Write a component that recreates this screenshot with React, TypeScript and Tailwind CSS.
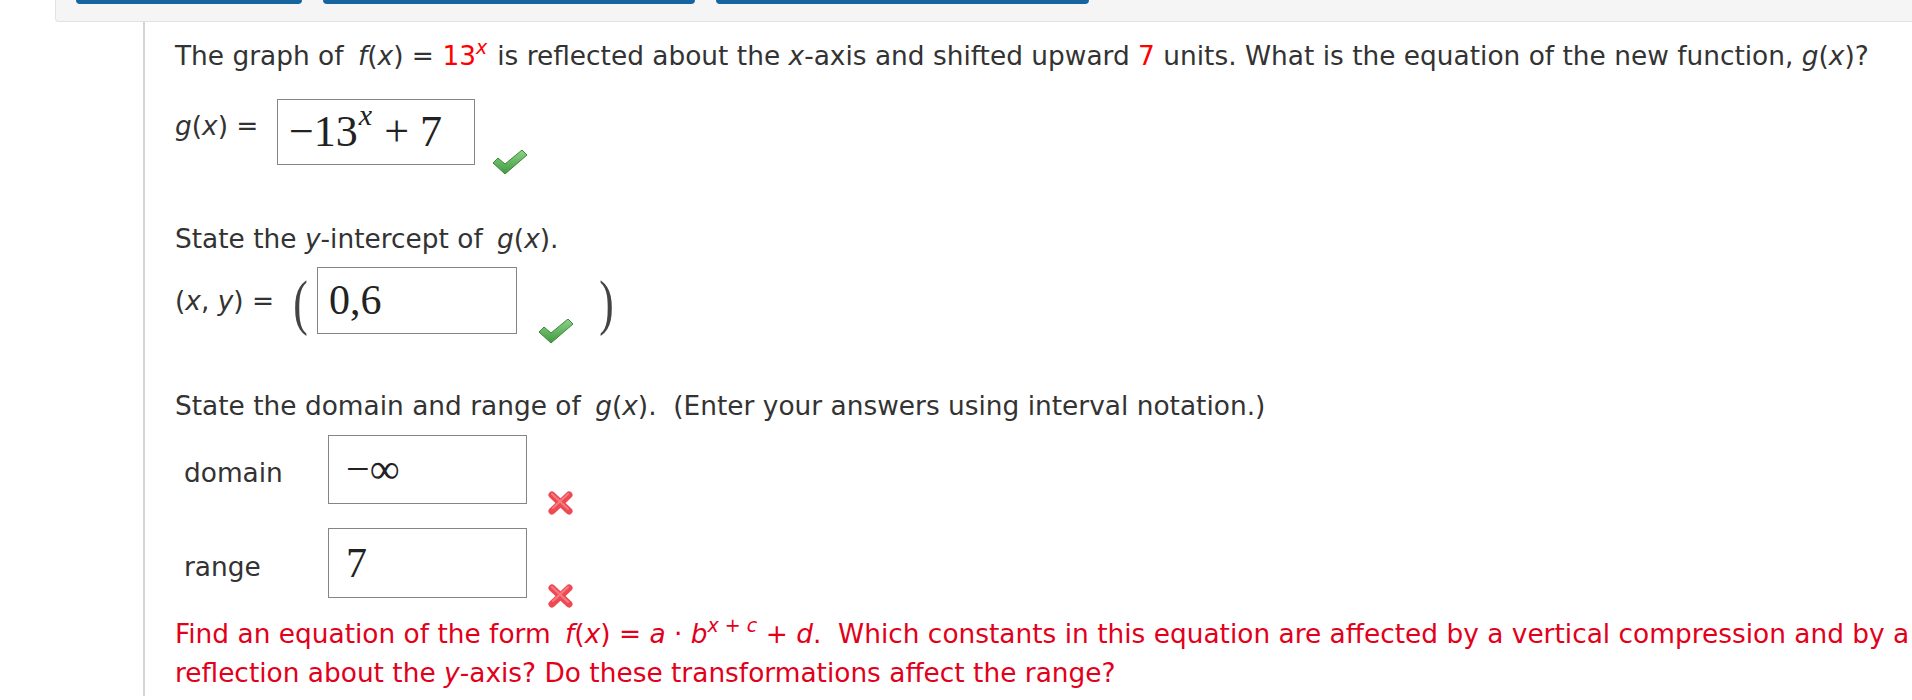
import React from 'react';

function Check() {
  return (
    <svg width="36" height="25" viewBox="0 0 36 25">
      <defs>
        <linearGradient id="chk" x1="0" y1="0" x2="0" y2="1">
          <stop offset="0" stopColor="#8fd18a" />
          <stop offset="1" stopColor="#3f9a3f" />
        </linearGradient>
      </defs>
      <polygon points="1,13 6,8 13,14 30,0 35,5 13,24" fill="url(#chk)" stroke="#3a8a3a" strokeWidth="1" strokeLinejoin="round" />
    </svg>
  );
}

function Cross() {
  return (
    <svg width="27" height="26" viewBox="0 0 27 26">
      <g stroke="#ee4a54" strokeWidth="7" strokeLinecap="round">
        <line x1="5" y1="5" x2="22" y2="21" />
        <line x1="22" y1="5" x2="5" y2="21" />
      </g>
      <g stroke="#f7888e" strokeWidth="2" strokeLinecap="round" opacity="0.8">
        <line x1="5" y1="4" x2="21" y2="19" />
        <line x1="21" y1="4" x2="6" y2="18" />
      </g>
    </svg>
  );
}

const serif = "font-['Liberation_Serif','Times_New_Roman',serif]";
const box = `border border-[#858585] flex items-center text-[42px] text-[#222] ${serif}`;

export default function App() {
  return (
    <div className="min-h-[700px] bg-white text-[#333] font-['DejaVu_Sans','Verdana',sans-serif] text-[26.4px]">
      {/* tab strip */}
      <div className="ml-[55px] h-[22px] bg-[#f5f5f5] border-l border-b border-[#e2e2e2] rounded-bl-[4px] flex gap-[21px] pl-[20px]">
        <div className="w-[226px] h-[4px] bg-[#17659f] rounded-b-[4px]" />
        <div className="w-[372px] h-[4px] bg-[#17659f] rounded-b-[4px]" />
        <div className="w-[373px] h-[4px] bg-[#17659f] rounded-b-[4px]" />
      </div>

      <div className="ml-[143px] border-l-2 border-[#d4d4d4] pl-[30px] pb-[4px]">
        <p className="pt-[18px] leading-[32px] whitespace-nowrap">
          The graph of <span className="ml-[6px] italic">f</span>(<span className="italic">x</span>) ={' '}
          <span className="text-[#ff0000]">13<sup className="italic text-[19px] -top-[11px]">x</sup></span>
          <span className="ml-[10px]">is reflected about the </span>
          <span className="italic">x</span>-axis and shifted upward <span className="text-[#ff0000]">7</span> units. What is the equation of the new function, <span className="italic">g</span>(<span className="italic">x</span>)?
        </p>

        <div className="mt-[27px] flex items-start">
          <div className="w-[102px] mt-[11px] leading-[32px] whitespace-nowrap">
            <span className="italic">g</span>(<span className="italic">x</span>) =
          </div>
          <div className={`w-[198px] h-[66px] pl-[11px] ${box} text-[44px]`}>
            <span>−13</span>
            <sup className="italic text-[30px] -top-[17px] ml-[1px]">x</sup>
            <span className="ml-[12px]">+</span>
            <span className="ml-[11px]">7</span>
          </div>
          <div className="ml-[17px] mt-[51px]">
            <Check />
          </div>
        </div>

        <p className="mt-[48px] leading-[32px]">
          State the <span className="italic">y</span>-intercept of <span className="ml-[6px] italic">g</span>(<span className="italic">x</span>).
        </p>

        <div className="mt-[12px] flex items-start">
          <div className="w-[116px] mt-[18px] leading-[32px] whitespace-nowrap">
            (<span className="italic">x</span>, <span className="italic">y</span>) =
          </div>
          <div className={`w-[15px] mt-[4px] text-[62px] leading-[62px] text-[#444] scale-x-[0.7] ${serif}`}>(</div>
          <div className={`ml-[11px] w-[200px] h-[67px] pl-[11px] ${box}`}>0,6</div>
          <div className="ml-[21px] mt-[52px]">
            <Check />
          </div>
          <div className={`ml-[23px] mt-[4px] w-[15px] text-[62px] leading-[62px] text-[#444] scale-x-[0.7] ${serif}`}>)</div>
        </div>

        <p className="mt-[46px] leading-[32px]">
          State the domain and range of <span className="ml-[6px] italic">g</span>(<span className="italic">x</span>).&nbsp; (Enter your answers using interval notation.)
        </p>

        <div className="mt-[13px] flex items-start">
          <div className="w-[153px] pl-[9px] mt-[22px] leading-[32px]">domain</div>
          <div className={`w-[199px] h-[69px] pl-[17px] ${box}`}>−∞</div>
          <div className="ml-[20px] mt-[55px]">
            <Cross />
          </div>
        </div>

        <div className="mt-[12px] flex items-start">
          <div className="w-[153px] pl-[9px] mt-[23px] leading-[32px]">range</div>
          <div className={`w-[199px] h-[70px] pl-[17px] ${box}`}>7</div>
          <div className="ml-[20px] mt-[55px]">
            <Cross />
          </div>
        </div>

        <p className="mt-[5px] leading-[39px] text-[#e2001a] whitespace-nowrap">
          Find an equation of the form <span className="ml-[6px] italic">f</span>(<span className="italic">x</span>) = <span className="italic">a</span> · <span className="italic">b</span>
          <sup className="text-[19px] -top-[11px]"><span className="italic">x</span> + <span className="italic">c</span></sup> + <span className="italic">d</span>.&nbsp; Which constants in this equation are affected by a vertical compression and by a
          <br />
          reflection about the <span className="italic">y</span>-axis? Do these transformations affect the range?
        </p>
      </div>
    </div>
  );
}
